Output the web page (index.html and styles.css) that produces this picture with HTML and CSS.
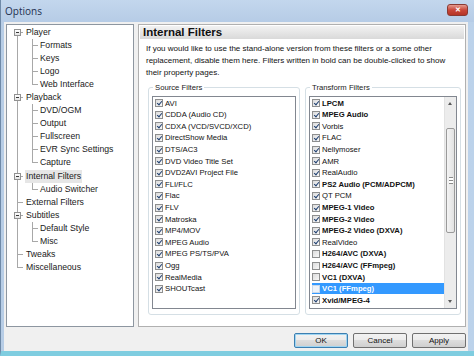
FILE: index.html
```html
<!DOCTYPE html>
<html lang="en">
<head>
    <meta charset="UTF-8">
    <title>Options</title>
    <link rel="stylesheet" href="styles.css">
</head>
<body>
    <div class="window">
        <div class="titlebar">
            <span class="title">Options</span>
            <span class="close">&#x2715;</span>
        </div>

        <div class="client">
            <div class="main">
                <!-- 左侧树形导航 -->
                <ul class="tree">
                    <li><span class="exp"></span><span class="label">Player</span>
                        <ul>
                            <li><span class="label">Formats</span></li>
                            <li><span class="label">Keys</span></li>
                            <li><span class="label">Logo</span></li>
                            <li><span class="label">Web Interface</span></li>
                        </ul>
                    </li>
                    <li><span class="exp"></span><span class="label">Playback</span>
                        <ul>
                            <li><span class="label">DVD/OGM</span></li>
                            <li><span class="label">Output</span></li>
                            <li><span class="label">Fullscreen</span></li>
                            <li><span class="label">EVR Sync Settings</span></li>
                            <li><span class="label">Capture</span></li>
                        </ul>
                    </li>
                    <li><span class="exp"></span><span class="label sel">Internal Filters</span>
                        <ul>
                            <li><span class="label">Audio Switcher</span></li>
                        </ul>
                    </li>
                    <li><span class="label">External Filters</span></li>
                    <li><span class="exp"></span><span class="label">Subtitles</span>
                        <ul>
                            <li><span class="label">Default Style</span></li>
                            <li><span class="label">Misc</span></li>
                        </ul>
                    </li>
                    <li><span class="label">Tweaks</span></li>
                    <li><span class="label">Miscellaneous</span></li>
                </ul>

                <!-- 右侧页面 -->
                <div class="page">
                    <div class="page-head">Internal Filters</div>
                    <p class="desc">If you would like to use the stand-alone version from these filters or a some other<br>replacement, disable them here. Filters written in bold can be double-clicked to show<br>their property pages.</p>

                    <div class="groups">
                        <fieldset class="group src">
                            <legend>Source Filters</legend>
                            <ul class="list">
                                <li><span class="cb on"></span>AVI</li>
                                <li><span class="cb on"></span>CDDA (Audio CD)</li>
                                <li><span class="cb on"></span>CDXA (VCD/SVCD/XCD)</li>
                                <li><span class="cb on"></span>DirectShow Media</li>
                                <li><span class="cb on"></span>DTS/AC3</li>
                                <li><span class="cb on"></span>DVD Video Title Set</li>
                                <li><span class="cb on"></span>DVD2AVI Project File</li>
                                <li><span class="cb on"></span>FLI/FLC</li>
                                <li><span class="cb on"></span>Flac</li>
                                <li><span class="cb on"></span>FLV</li>
                                <li><span class="cb on"></span>Matroska</li>
                                <li><span class="cb on"></span>MP4/MOV</li>
                                <li><span class="cb on"></span>MPEG Audio</li>
                                <li><span class="cb on"></span>MPEG PS/TS/PVA</li>
                                <li><span class="cb on"></span>Ogg</li>
                                <li><span class="cb on"></span>RealMedia</li>
                                <li><span class="cb on"></span>SHOUTcast</li>
                            </ul>
                        </fieldset>

                        <fieldset class="group xf">
                            <legend>Transform Filters</legend>
                            <div class="list scroll">
                                <ul class="rows">
                                    <li class="b"><span class="cb on"></span>LPCM</li>
                                    <li class="b"><span class="cb on"></span>MPEG Audio</li>
                                    <li><span class="cb on"></span>Vorbis</li>
                                    <li><span class="cb on"></span>FLAC</li>
                                    <li><span class="cb on"></span>Nellymoser</li>
                                    <li><span class="cb on"></span>AMR</li>
                                    <li><span class="cb on"></span>RealAudio</li>
                                    <li class="b"><span class="cb on"></span>PS2 Audio (PCM/ADPCM)</li>
                                    <li><span class="cb on"></span>QT PCM</li>
                                    <li class="b"><span class="cb on"></span>MPEG-1 Video</li>
                                    <li class="b"><span class="cb on"></span>MPEG-2 Video</li>
                                    <li class="b"><span class="cb on"></span>MPEG-2 Video (DXVA)</li>
                                    <li><span class="cb on"></span>RealVideo</li>
                                    <li class="b"><span class="cb"></span>H264/AVC (DXVA)</li>
                                    <li class="b"><span class="cb"></span>H264/AVC (FFmpeg)</li>
                                    <li class="b"><span class="cb"></span>VC1 (DXVA)</li>
                                    <li class="b picked"><span class="cb"></span>VC1 (FFmpeg)</li>
                                    <li class="b"><span class="cb on"></span>Xvid/MPEG-4</li>
                                    <li><span class="cb on"></span></li>
                                </ul>
                                <div class="scrollbar">
                                    <span class="arrow up"></span>
                                    <span class="track"><span class="thumb"></span></span>
                                    <span class="arrow down"></span>
                                </div>
                            </div>
                        </fieldset>
                    </div>
                </div>
            </div>

            <div class="buttons">
                <button class="btn default">OK</button>
                <button class="btn">Cancel</button>
                <button class="btn">Apply</button>
            </div>
        </div>
    </div>
</body>
</html>
```

FILE: styles.css
```css
/* 窗口框架 */
* {
    box-sizing: border-box;
}
body {
    margin: 0;
    font-family: 'Liberation Sans', Arial, sans-serif;
    background-color: #ffffff;
}
.window {
    width: 474px;
    height: 356px;
    display: flex;
    flex-direction: column;
    background: linear-gradient(90deg, #b7cde6, #c9dbef 50%, #bcd2ea);
    border-left: 1px solid #6f8aa8;
    border-bottom: 5px solid #7fcde0;
}

/* 标题栏 */
.titlebar {
    height: 22px;
    display: flex;
    align-items: flex-start;
    padding-left: 4px;
    background: linear-gradient(#c3d7ed, #b6cce6);
}
.title {
    margin-top: 4px;
    font-family: 'Open Sans', 'Liberation Sans', sans-serif;
    font-size: 10px;
    color: #1e3050;
}
.close {
    margin-left: auto;
    margin-right: 6px;
    margin-top: 4px;
    width: 21px;
    height: 12px;
    border: 1px solid #8a3a33;
    border-radius: 3px;
    background: linear-gradient(#e59b8f, #c9473a 50%, #b53527);
    color: #ffffff;
    font-size: 7px;
    font-weight: bold;
    line-height: 10px;
    text-align: center;
}

/* 客户区 */
.client {
    flex: 1;
    margin: 0 6px 0 3px;
    padding: 2px 2px 0;
    background-color: #f0f0f0;
    display: flex;
    flex-direction: column;
}
.main {
    height: 303px;
    display: flex;
    gap: 4px;
}

/* 树形导航 */
.tree, .tree ul {
    list-style: none;
    margin: 0;
    padding: 0;
}
.tree {
    width: 128px;
    padding-top: 1px;
    background-color: #ffffff;
    border: 1px solid #8d96a0;
    font-size: 8.7px;
    color: #1a1a1a;
}
.tree li {
    position: relative;
    padding-left: 18px;
}
.tree li::before {
    content: "";
    position: absolute;
    left: 10px;
    top: 0;
    bottom: 0;
    border-left: 1px solid #a8a8a8;
}
.tree > li:first-child::before {
    top: 6px;
}
.tree li:last-child::before {
    bottom: auto;
    height: 7px;
}
.tree li::after {
    content: "";
    position: absolute;
    left: 11px;
    top: 6px;
    width: 5px;
    border-top: 1px solid #a8a8a8;
}
.tree ul li {
    padding-left: 14px;
}
.tree ul li::before {
    left: 7px;
}
.tree ul li::after {
    left: 8px;
    width: 5px;
}
.tree .label {
    display: inline-block;
    height: 13.06px;
    line-height: 13.06px;
    padding: 0 1px;
}
.tree .sel {
    background-color: #e6e6e6;
}
.exp {
    position: absolute;
    left: 7px;
    top: 3px;
    width: 7px;
    height: 7px;
    border: 1px solid #929292;
    background: linear-gradient(#ffffff, #e4e4e4);
    z-index: 1;
}
.exp::after {
    content: "";
    position: absolute;
    left: 1px;
    top: 2px;
    width: 3px;
    height: 1px;
    background-color: #3a3a3a;
}

/* 右侧页面 */
.page {
    flex: 1;
    background-color: #ffffff;
    border: 1px solid #b0b0b0;
    display: flex;
    flex-direction: column;
}
.page-head {
    margin: 1px 1px 0;
    height: 13px;
    padding-left: 3px;
    background: linear-gradient(#f2f2f2, #d9d9d9);
    font-size: 11.5px;
    font-weight: bold;
    line-height: 13px;
    color: #111111;
}
.desc {
    margin: 0;
    padding: 4px 7px 0;
    font-size: 8px;
    line-height: 11.8px;
    white-space: nowrap;
    color: #111111;
}

/* 分组框 */
.groups {
    display: flex;
    gap: 5px;
    padding: 0 4px 0 9px;
    margin-top: 5px;
}
.group {
    margin: 0;
    padding: 0 3px 5px;
    min-width: 0;
    border: 1px solid #d5dfe5;
    border-radius: 3px;
}
.src {
    width: 152px;
}
.xf {
    width: 156px;
}
legend {
    padding: 0 2px;
    margin-left: 1px;
    font-size: 7.7px;
    line-height: 9px;
    color: #222222;
}

/* 列表框 */
.list {
    list-style: none;
    margin: 4px 0 0;
    height: 213px;
    padding: 0 0 0 2px;
    background-color: #ffffff;
    border: 1px solid #828790;
    overflow: hidden;
    font-size: 7.7px;
    color: #111111;
}
.scroll {
    display: flex;
}
.rows {
    flex: 1;
    list-style: none;
    margin: 0;
    padding: 0;
}
.list li {
    height: 11.6px;
    display: flex;
    align-items: center;
    gap: 2px;
    white-space: nowrap;
}
.list li.b {
    font-weight: bold;
}
.list li.picked {
    background-color: #3399ff;
    color: #ffffff;
}

/* 复选框 */
.cb {
    position: relative;
    flex: none;
    width: 8px;
    height: 8px;
    border: 1px solid #8e8f8f;
    background: linear-gradient(135deg, #dcdcdc, #f8f8f8);
}
.cb.on::after {
    content: "";
    position: absolute;
    left: 2px;
    top: 0;
    width: 2px;
    height: 4px;
    border-right: 1.4px solid #1f3f70;
    border-bottom: 1.4px solid #1f3f70;
    transform: rotate(40deg);
}
.picked .cb {
    border-color: #c8d8ea;
    background: #eef3f9;
}

/* 滚动条 */
.scrollbar {
    flex: none;
    width: 12px;
    display: flex;
    flex-direction: column;
    background-color: #ececec;
    border-left: 1px solid #e2e2e2;
}
.arrow {
    position: relative;
    height: 12px;
}
.arrow::after {
    content: "";
    position: absolute;
    left: 3px;
    top: 5px;
    border-left: 2.5px solid transparent;
    border-right: 2.5px solid transparent;
}
.up::after {
    border-bottom: 3px solid #5a5a5a;
}
.down::after {
    border-top: 3px solid #5a5a5a;
    top: 4px;
}
.track {
    flex: 1;
    padding-top: 19px;
}
.thumb {
    display: block;
    position: relative;
    height: 105px;
    margin: 0 1px;
    border: 1px solid #9a9a9a;
    border-radius: 2px;
    background: linear-gradient(90deg, #f4f4f4, #e2e2e2);
}
.thumb::after {
    content: "";
    position: absolute;
    left: 2px;
    top: 48px;
    width: 4px;
    height: 5px;
    border-top: 1px solid #8a8a8a;
    border-bottom: 1px solid #8a8a8a;
    background: linear-gradient(#ffffff 40%, #8a8a8a 40%, #8a8a8a 60%, #ffffff 60%);
}

/* 底部按钮 */
.buttons {
    display: flex;
    justify-content: flex-end;
    gap: 5px;
    padding-top: 6px;
}
.btn {
    width: 54px;
    height: 15px;
    padding: 0;
    border: 1px solid #707070;
    border-radius: 2px;
    background: linear-gradient(#f2f2f2, #ebebeb 50%, #dddddd 50%, #cfcfcf);
    font-family: 'Liberation Sans', Arial, sans-serif;
    font-size: 8px;
    color: #111111;
}
.btn.default {
    border-color: #3c7fb1;
    box-shadow: inset 0 0 0 1px #9fd5f2;
}
```
